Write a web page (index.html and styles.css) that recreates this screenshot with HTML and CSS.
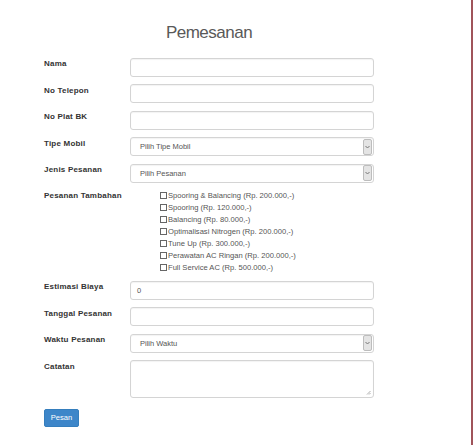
FILE: index.html
```html
<!DOCTYPE html>
<html>
<head>
<meta charset="utf-8">
<link rel="stylesheet" href="styles.css">
</head>
<body>
<div class="page">
  <div class="content">
    <form class="form">
      <h1 class="title">Pemesanan</h1>

      <div class="row">
        <label class="label">Nama</label>
        <div class="field input"></div>
      </div>
      <div class="row">
        <label class="label">No Telepon</label>
        <div class="field input"></div>
      </div>
      <div class="row">
        <label class="label">No Plat BK</label>
        <div class="field input"></div>
      </div>
      <div class="row">
        <label class="label">Tipe Mobil</label>
        <div class="field select"><span class="value">Pilih Tipe Mobil</span><span class="arrow"><svg width="5" height="4" viewBox="0 0 5 4"><path d="M0.5 1 L2.5 3 L4.5 1" fill="none" stroke="#777" stroke-width="1"/></svg></span></div>
      </div>
      <div class="row">
        <label class="label">Jenis Pesanan</label>
        <div class="field select"><span class="value">Pilih Pesanan</span><span class="arrow"><svg width="5" height="4" viewBox="0 0 5 4"><path d="M0.5 1 L2.5 3 L4.5 1" fill="none" stroke="#777" stroke-width="1"/></svg></span></div>
      </div>
      <div class="row">
        <label class="label">Pesanan Tambahan</label>
        <div class="checks">
          <label class="check"><span class="box"></span>Spooring &amp; Balancing (Rp. 200.000,-)</label>
          <label class="check"><span class="box"></span>Spooring (Rp. 120.000,-)</label>
          <label class="check"><span class="box"></span>Balancing (Rp. 80.000,-)</label>
          <label class="check"><span class="box"></span>Optimalisasi Nitrogen (Rp. 200.000,-)</label>
          <label class="check"><span class="box"></span>Tune Up (Rp. 300.000,-)</label>
          <label class="check"><span class="box"></span>Perawatan AC Ringan (Rp. 200.000,-)</label>
          <label class="check"><span class="box"></span>Full Service AC (Rp. 500.000,-)</label>
        </div>
      </div>
      <div class="row">
        <label class="label">Estimasi Biaya</label>
        <div class="field input"><span class="value value-input">0</span></div>
      </div>
      <div class="row">
        <label class="label">Tanggal Pesanan</label>
        <div class="field input"></div>
      </div>
      <div class="row">
        <label class="label">Waktu Pesanan</label>
        <div class="field select"><span class="value">Pilih Waktu</span><span class="arrow"><svg width="5" height="4" viewBox="0 0 5 4"><path d="M0.5 1 L2.5 3 L4.5 1" fill="none" stroke="#777" stroke-width="1"/></svg></span></div>
      </div>
      <div class="row">
        <label class="label">Catatan</label>
        <div class="field textarea"><svg class="grip" width="5" height="5" viewBox="0 0 5 5"><path d="M4.5 1 L1 4.5 M4.5 3 L3 4.5" stroke="#999" stroke-width="0.8"/></svg></div>
      </div>
      <div class="actions">
        <button type="button" class="btn">Pesan</button>
      </div>
    </form>
  </div>
  <div class="edge"></div>
</div>
</body>
</html>
```

FILE: styles.css
```css
* { box-sizing: border-box; }
html, body { margin: 0; padding: 0; background: #fff; }
body { font-family: "Liberation Sans", Arial, sans-serif; }

.page {
  display: flex;
  width: 474px;
  height: 445px;
  padding-right: 1px;
}
.content { flex: 1; }
.edge {
  width: 2px;
  background: #a0545a;
}

.form {
  margin: 0;
  padding: 23px 0 0 44px;
  width: 374px;
  display: flex;
  flex-direction: column;
  gap: 7.4px;
}

.title {
  margin: 0 0 7.6px 0;
  text-align: center;
  font-weight: normal;
  font-size: 17px;
  line-height: 20px;
  letter-spacing: -0.5px;
  color: #595959;
}

.row {
  display: flex;
  align-items: flex-start;
}
.label {
  width: 86px;
  flex: none;
  font-size: 8px;
  line-height: 12px;
  font-weight: bold;
  color: #333;
  letter-spacing: 0.2px;
  margin-top: 0.5px;
}

.field {
  width: 244px;
  height: 19px;
  border: 1px solid #d4d4d4;
  border-radius: 3px;
  background: #fff;
  box-shadow: inset 0 1px 1px rgba(0,0,0,0.05);
  display: flex;
  align-items: center;
  font-size: 7.5px;
  color: #555;
}
.value { padding-left: 9px; }
.value-input { padding-left: 6px; }

.select { justify-content: space-between; padding-right: 1px; }
.arrow {
  width: 9px;
  height: 16px;
  background: #e4e4e4;
  border: 1px solid #bdbdbd;
  border-radius: 2px;
  display: flex;
  align-items: center;
  justify-content: center;
}

.textarea {
  height: 38px;
  align-items: flex-end;
  justify-content: flex-end;
  padding: 0 2px 2px 0;
}
.grip { display: block; }

.checks {
  margin-left: 30px;
  display: flex;
  flex-direction: column;
}
.check {
  display: flex;
  align-items: center;
  height: 11.95px;
  font-size: 7.6px;
  color: #555;
}
.box {
  width: 7px;
  height: 7px;
  border: 1px solid #666;
  margin-right: 1px;
  flex: none;
  background: #fff;
}

.actions { margin-top: 0.6px; }
.btn {
  width: 35px;
  height: 18px;
  padding: 0;
  border: 1px solid #357ebd;
  border-radius: 2px;
  background: #3d86c9;
  color: #fff;
  font-family: "Liberation Sans", Arial, sans-serif;
  font-size: 7.6px;
}
```
